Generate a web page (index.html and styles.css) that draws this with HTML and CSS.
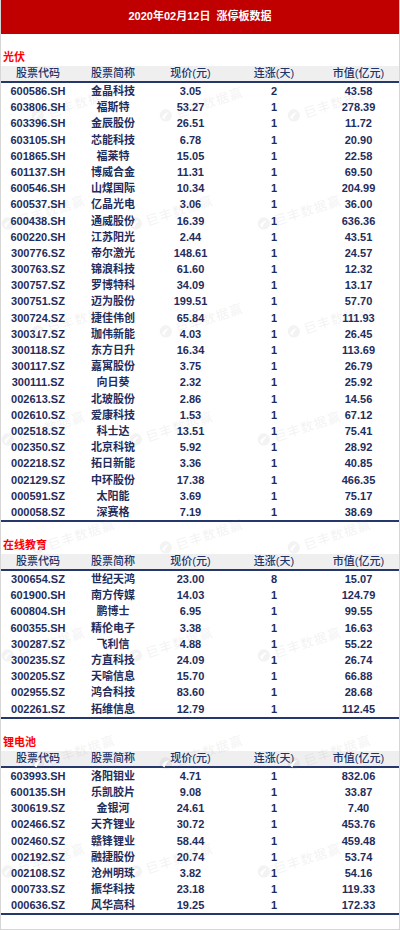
FILE: index.html
```html
<!DOCTYPE html>
<html lang="zh">
<head>
<meta charset="utf-8">
<title>涨停板数据</title>
<link rel="stylesheet" href="styles.css">
</head>
<body>
<div class="page">
  <div class="topbar">2020年02月12日&nbsp;&nbsp;涨停板数据</div>

  <section class="sec">
    <div class="sec-title">光伏</div>
    <div class="row head"><span>股票代码</span><span>股票简称</span><span>现价(元)</span><span>连涨(天)</span><span>市值(亿元)</span></div>
    <div class="rows">
      <div class="row"><span>600586.SH</span><span>金晶科技</span><span>3.05</span><span>2</span><span>43.58</span></div>
      <div class="row"><span>603806.SH</span><span>福斯特</span><span>53.27</span><span>1</span><span>278.39</span></div>
      <div class="row"><span>603396.SH</span><span>金辰股份</span><span>26.51</span><span>1</span><span>11.72</span></div>
      <div class="row"><span>603105.SH</span><span>芯能科技</span><span>6.78</span><span>1</span><span>20.90</span></div>
      <div class="row"><span>601865.SH</span><span>福莱特</span><span>15.05</span><span>1</span><span>22.58</span></div>
      <div class="row"><span>601137.SH</span><span>博威合金</span><span>11.31</span><span>1</span><span>69.50</span></div>
      <div class="row"><span>600546.SH</span><span>山煤国际</span><span>10.34</span><span>1</span><span>204.99</span></div>
      <div class="row"><span>600537.SH</span><span>亿晶光电</span><span>3.06</span><span>1</span><span>36.00</span></div>
      <div class="row"><span>600438.SH</span><span>通威股份</span><span>16.39</span><span>1</span><span>636.36</span></div>
      <div class="row"><span>600220.SH</span><span>江苏阳光</span><span>2.44</span><span>1</span><span>43.51</span></div>
      <div class="row"><span>300776.SZ</span><span>帝尔激光</span><span>148.61</span><span>1</span><span>24.57</span></div>
      <div class="row"><span>300763.SZ</span><span>锦浪科技</span><span>61.60</span><span>1</span><span>12.32</span></div>
      <div class="row"><span>300757.SZ</span><span>罗博特科</span><span>34.09</span><span>1</span><span>13.17</span></div>
      <div class="row"><span>300751.SZ</span><span>迈为股份</span><span>199.51</span><span>1</span><span>57.70</span></div>
      <div class="row"><span>300724.SZ</span><span>捷佳伟创</span><span>65.84</span><span>1</span><span>111.93</span></div>
      <div class="row"><span>300317.SZ</span><span>珈伟新能</span><span>4.03</span><span>1</span><span>26.45</span></div>
      <div class="row"><span>300118.SZ</span><span>东方日升</span><span>16.34</span><span>1</span><span>113.69</span></div>
      <div class="row"><span>300117.SZ</span><span>嘉寓股份</span><span>3.75</span><span>1</span><span>26.79</span></div>
      <div class="row"><span>300111.SZ</span><span>向日葵</span><span>2.32</span><span>1</span><span>25.92</span></div>
      <div class="row"><span>002613.SZ</span><span>北玻股份</span><span>2.86</span><span>1</span><span>14.56</span></div>
      <div class="row"><span>002610.SZ</span><span>爱康科技</span><span>1.53</span><span>1</span><span>67.12</span></div>
      <div class="row"><span>002518.SZ</span><span>科士达</span><span>13.51</span><span>1</span><span>75.41</span></div>
      <div class="row"><span>002350.SZ</span><span>北京科锐</span><span>5.92</span><span>1</span><span>28.92</span></div>
      <div class="row"><span>002218.SZ</span><span>拓日新能</span><span>3.36</span><span>1</span><span>40.85</span></div>
      <div class="row"><span>002129.SZ</span><span>中环股份</span><span>17.38</span><span>1</span><span>466.35</span></div>
      <div class="row"><span>000591.SZ</span><span>太阳能</span><span>3.69</span><span>1</span><span>75.17</span></div>
      <div class="row"><span>000058.SZ</span><span>深赛格</span><span>7.19</span><span>1</span><span>38.69</span></div>
    </div>
  </section>

  <section class="sec">
    <div class="sec-title">在线教育</div>
    <div class="row head"><span>股票代码</span><span>股票简称</span><span>现价(元)</span><span>连涨(天)</span><span>市值(亿元)</span></div>
    <div class="rows">
      <div class="row"><span>300654.SZ</span><span>世纪天鸿</span><span>23.00</span><span>8</span><span>15.07</span></div>
      <div class="row"><span>601900.SH</span><span>南方传媒</span><span>14.03</span><span>1</span><span>124.79</span></div>
      <div class="row"><span>600804.SH</span><span>鹏博士</span><span>6.95</span><span>1</span><span>99.55</span></div>
      <div class="row"><span>600355.SH</span><span>精伦电子</span><span>3.38</span><span>1</span><span>16.63</span></div>
      <div class="row"><span>300287.SZ</span><span>飞利信</span><span>4.88</span><span>1</span><span>55.22</span></div>
      <div class="row"><span>300235.SZ</span><span>方直科技</span><span>24.09</span><span>1</span><span>26.74</span></div>
      <div class="row"><span>300205.SZ</span><span>天喻信息</span><span>15.70</span><span>1</span><span>66.88</span></div>
      <div class="row"><span>002955.SZ</span><span>鸿合科技</span><span>83.60</span><span>1</span><span>28.68</span></div>
      <div class="row"><span>002261.SZ</span><span>拓维信息</span><span>12.79</span><span>1</span><span>112.45</span></div>
    </div>
  </section>

  <section class="sec">
    <div class="sec-title">锂电池</div>
    <div class="row head"><span>股票代码</span><span>股票简称</span><span>现价(元)</span><span>连涨(天)</span><span>市值(亿元)</span></div>
    <div class="rows">
      <div class="row"><span>603993.SH</span><span>洛阳钼业</span><span>4.71</span><span>1</span><span>832.06</span></div>
      <div class="row"><span>600135.SH</span><span>乐凯胶片</span><span>9.08</span><span>1</span><span>33.87</span></div>
      <div class="row"><span>300619.SZ</span><span>金银河</span><span>24.61</span><span>1</span><span>7.40</span></div>
      <div class="row"><span>002466.SZ</span><span>天齐锂业</span><span>30.72</span><span>1</span><span>453.76</span></div>
      <div class="row"><span>002460.SZ</span><span>赣锋锂业</span><span>58.44</span><span>1</span><span>459.48</span></div>
      <div class="row"><span>002192.SZ</span><span>融捷股份</span><span>20.74</span><span>1</span><span>53.74</span></div>
      <div class="row"><span>002108.SZ</span><span>沧州明珠</span><span>3.82</span><span>1</span><span>54.16</span></div>
      <div class="row"><span>000733.SZ</span><span>振华科技</span><span>23.18</span><span>1</span><span>119.33</span></div>
      <div class="row"><span>000636.SZ</span><span>风华高科</span><span>19.25</span><span>1</span><span>172.33</span></div>
    </div>
  </section>

  <div class="watermarks" aria-hidden="true">
    <span class="wm"><svg class="wm-logo" viewBox="0 0 16 16"><circle cx="8" cy="8" r="7" fill="currentColor"/><path d="M3 9 Q8 4 13 6 Q8 7 5 12 Z" fill="#fff"/></svg>巨丰数据赢</span>
    <span class="wm"><svg class="wm-logo" viewBox="0 0 16 16"><circle cx="8" cy="8" r="7" fill="currentColor"/><path d="M3 9 Q8 4 13 6 Q8 7 5 12 Z" fill="#fff"/></svg>巨丰数据赢</span>
    <span class="wm"><svg class="wm-logo" viewBox="0 0 16 16"><circle cx="8" cy="8" r="7" fill="currentColor"/><path d="M3 9 Q8 4 13 6 Q8 7 5 12 Z" fill="#fff"/></svg>巨丰数据赢</span>
    <span class="wm"><svg class="wm-logo" viewBox="0 0 16 16"><circle cx="8" cy="8" r="7" fill="currentColor"/><path d="M3 9 Q8 4 13 6 Q8 7 5 12 Z" fill="#fff"/></svg>巨丰数据赢</span>
    <span class="wm"><svg class="wm-logo" viewBox="0 0 16 16"><circle cx="8" cy="8" r="7" fill="currentColor"/><path d="M3 9 Q8 4 13 6 Q8 7 5 12 Z" fill="#fff"/></svg>巨丰数据赢</span>
    <span class="wm"><svg class="wm-logo" viewBox="0 0 16 16"><circle cx="8" cy="8" r="7" fill="currentColor"/><path d="M3 9 Q8 4 13 6 Q8 7 5 12 Z" fill="#fff"/></svg>巨丰数据赢</span>
    <span class="wm"><svg class="wm-logo" viewBox="0 0 16 16"><circle cx="8" cy="8" r="7" fill="currentColor"/><path d="M3 9 Q8 4 13 6 Q8 7 5 12 Z" fill="#fff"/></svg>巨丰数据赢</span>
    <span class="wm"><svg class="wm-logo" viewBox="0 0 16 16"><circle cx="8" cy="8" r="7" fill="currentColor"/><path d="M3 9 Q8 4 13 6 Q8 7 5 12 Z" fill="#fff"/></svg>巨丰数据赢</span>
    <span class="wm"><svg class="wm-logo" viewBox="0 0 16 16"><circle cx="8" cy="8" r="7" fill="currentColor"/><path d="M3 9 Q8 4 13 6 Q8 7 5 12 Z" fill="#fff"/></svg>巨丰数据赢</span>
    <span class="wm"><svg class="wm-logo" viewBox="0 0 16 16"><circle cx="8" cy="8" r="7" fill="currentColor"/><path d="M3 9 Q8 4 13 6 Q8 7 5 12 Z" fill="#fff"/></svg>巨丰数据赢</span>
    <span class="wm"><svg class="wm-logo" viewBox="0 0 16 16"><circle cx="8" cy="8" r="7" fill="currentColor"/><path d="M3 9 Q8 4 13 6 Q8 7 5 12 Z" fill="#fff"/></svg>巨丰数据赢</span>
    <span class="wm"><svg class="wm-logo" viewBox="0 0 16 16"><circle cx="8" cy="8" r="7" fill="currentColor"/><path d="M3 9 Q8 4 13 6 Q8 7 5 12 Z" fill="#fff"/></svg>巨丰数据赢</span>
    <span class="wm"><svg class="wm-logo" viewBox="0 0 16 16"><circle cx="8" cy="8" r="7" fill="currentColor"/><path d="M3 9 Q8 4 13 6 Q8 7 5 12 Z" fill="#fff"/></svg>巨丰数据赢</span>
    <span class="wm"><svg class="wm-logo" viewBox="0 0 16 16"><circle cx="8" cy="8" r="7" fill="currentColor"/><path d="M3 9 Q8 4 13 6 Q8 7 5 12 Z" fill="#fff"/></svg>巨丰数据赢</span>
    <span class="wm"><svg class="wm-logo" viewBox="0 0 16 16"><circle cx="8" cy="8" r="7" fill="currentColor"/><path d="M3 9 Q8 4 13 6 Q8 7 5 12 Z" fill="#fff"/></svg>巨丰数据赢</span>
    <span class="wm"><svg class="wm-logo" viewBox="0 0 16 16"><circle cx="8" cy="8" r="7" fill="currentColor"/><path d="M3 9 Q8 4 13 6 Q8 7 5 12 Z" fill="#fff"/></svg>巨丰数据赢</span>
    <span class="wm"><svg class="wm-logo" viewBox="0 0 16 16"><circle cx="8" cy="8" r="7" fill="currentColor"/><path d="M3 9 Q8 4 13 6 Q8 7 5 12 Z" fill="#fff"/></svg>巨丰数据赢</span>
    <span class="wm"><svg class="wm-logo" viewBox="0 0 16 16"><circle cx="8" cy="8" r="7" fill="currentColor"/><path d="M3 9 Q8 4 13 6 Q8 7 5 12 Z" fill="#fff"/></svg>巨丰数据赢</span>
    <span class="wm"><svg class="wm-logo" viewBox="0 0 16 16"><circle cx="8" cy="8" r="7" fill="currentColor"/><path d="M3 9 Q8 4 13 6 Q8 7 5 12 Z" fill="#fff"/></svg>巨丰数据赢</span>
    <span class="wm"><svg class="wm-logo" viewBox="0 0 16 16"><circle cx="8" cy="8" r="7" fill="currentColor"/><path d="M3 9 Q8 4 13 6 Q8 7 5 12 Z" fill="#fff"/></svg>巨丰数据赢</span>
    <span class="wm"><svg class="wm-logo" viewBox="0 0 16 16"><circle cx="8" cy="8" r="7" fill="currentColor"/><path d="M3 9 Q8 4 13 6 Q8 7 5 12 Z" fill="#fff"/></svg>巨丰数据赢</span>
    <span class="wm"><svg class="wm-logo" viewBox="0 0 16 16"><circle cx="8" cy="8" r="7" fill="currentColor"/><path d="M3 9 Q8 4 13 6 Q8 7 5 12 Z" fill="#fff"/></svg>巨丰数据赢</span>
    <span class="wm"><svg class="wm-logo" viewBox="0 0 16 16"><circle cx="8" cy="8" r="7" fill="currentColor"/><path d="M3 9 Q8 4 13 6 Q8 7 5 12 Z" fill="#fff"/></svg>巨丰数据赢</span>
    <span class="wm"><svg class="wm-logo" viewBox="0 0 16 16"><circle cx="8" cy="8" r="7" fill="currentColor"/><path d="M3 9 Q8 4 13 6 Q8 7 5 12 Z" fill="#fff"/></svg>巨丰数据赢</span>
  </div>
</div>
</body>
</html>
```

FILE: styles.css
```css
html, body {
  margin: 0;
  padding: 0;
  background: #ffffff;
}

.page {
  position: relative;
  width: 400px;
  height: 930px;
  box-sizing: border-box;
  border: 1px solid #d6d6d6;
  border-top: none;
  overflow: hidden;
  font-family: "Liberation Sans", "Noto Sans CJK SC", sans-serif;
  font-size: 11px;
  color: #1f2d5c;
}

.topbar {
  margin: 0 -1px;
  height: 34px;
  line-height: 33px;
  background: #c00000;
  color: #ffffff;
  font-weight: 700;
  text-align: center;
}

.sec-title {
  margin-top: 14px;
  height: 18px;
  line-height: 18px;
  padding-left: 2px;
  color: #ff0000;
  font-weight: 700;
}

.row {
  display: grid;
  grid-template-columns: 74px 76px 79px 88px 81px;
  height: 16.2px;
  line-height: 16.2px;
  font-weight: 700;
  text-align: center;
  white-space: nowrap;
}

.row.head {
  height: 15px;
  line-height: 15px;
  background: #efefef;
  border-bottom: 2px solid #26376b;
  font-weight: 500;
  color: #22336a;
}

.rows {
  border-bottom: 2px solid #26376b;
}

.watermarks {
  position: absolute;
  top: 50px;
  left: 8px;
  width: 384px;
  display: grid;
  grid-template-columns: repeat(3, 128px);
  grid-auto-rows: 108px;
  pointer-events: none;
}

.wm {
  display: flex;
  align-items: center;
  justify-content: center;
  gap: 3px;
  font-family: "Noto Sans CJK SC", sans-serif;
  font-size: 13px;
  font-weight: 500;
  color: rgba(120, 120, 120, 0.09);
  letter-spacing: 1px;
  transform: rotate(-18deg);
}

.wm:nth-child(6n+4),
.wm:nth-child(6n+5),
.wm:nth-child(6n+6) {
  transform: translate(-30px, 0) rotate(-18deg);
}

.wm-logo {
  width: 14px;
  height: 14px;
  flex: none;
}
```
